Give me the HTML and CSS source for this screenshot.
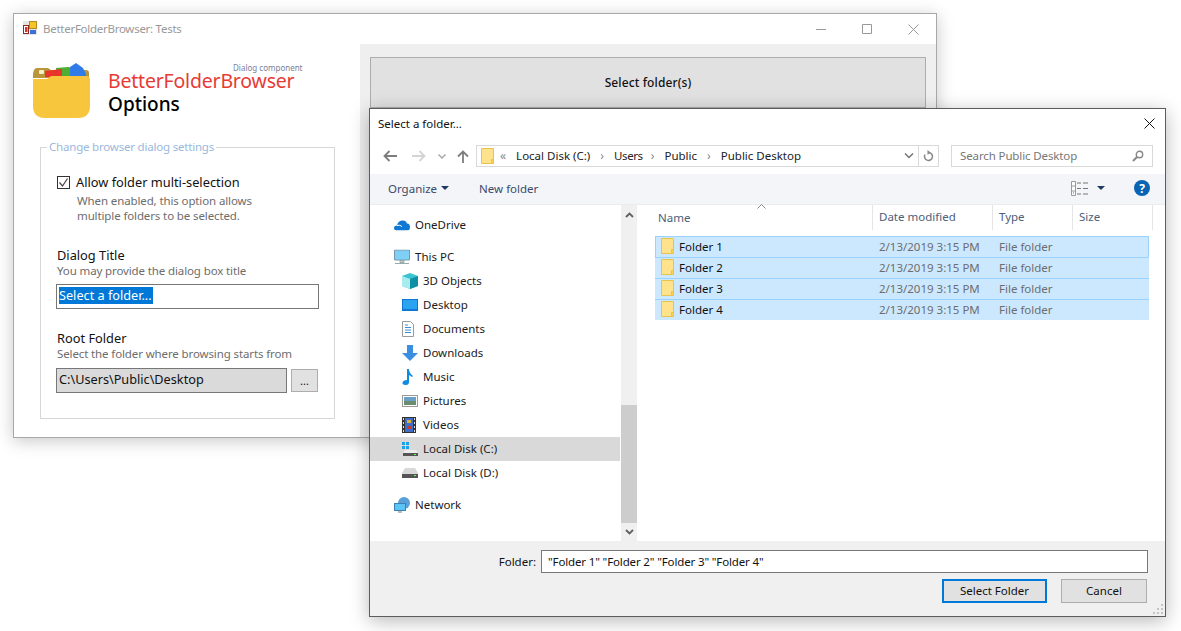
FILE: index.html
```html
<!DOCTYPE html>
<html lang="en">
<head>
<meta charset="utf-8">
<title>BetterFolderBrowser: Tests</title>
<link rel="stylesheet" href="styles.css">
</head>
<body>
<svg class="defs" width="0" height="0">
  <defs>
    <symbol id="folder" viewBox="0 0 13 16">
      <path d="M.5.500h12v15H.5z" fill="#ffe28c" stroke="#e8c44e"/>
      <path d="M10.500 15.500v-4h2v4z" fill="#ffd24f" stroke="#e8c44e"/>
    </symbol>
  </defs>
</svg>

<section class="window app">
  <header class="titlebar">
    <svg class="app-icon" width="14" height="14" viewBox="0 0 14 14">
      <rect x="0" y="0" width="14" height="14" fill="#e4e4e4"/>
      <rect x="6.500" y=".5" width="7" height="7" fill="#f6c525" stroke="#b08a20"/>
      <rect x="0.500" y="4.500" width="5" height="8" fill="#fff" stroke="#8a2a20"/>
      <rect x="2" y="6" width="2.500" height="5" fill="#d8352a"/>
      <rect x="7" y="9" width="6" height="4" fill="#3d6fd8"/>
    </svg>
    <span class="app-title">BetterFolderBrowser: Tests</span>
    <div class="caption-buttons">
      <span class="caption"><svg width="10" height="10" viewBox="0 0 10 10"><path d="M0 5.500h10" stroke="#999"/></svg></span>
      <span class="caption"><svg width="10" height="10" viewBox="0 0 10 10"><path d="M.5.500h9v9h-9z" fill="none" stroke="#999"/></svg></span>
      <span class="caption"><svg width="11" height="11" viewBox="0 0 11 11"><path d="M.5.500l10 10M10.500.500l-10 10" stroke="#999"/></svg></span>
    </div>
  </header>
  <div class="app-body">
    <aside class="options">
      <div class="brand">
        <svg class="logo" width="57" height="57" viewBox="0 0 57 57">
          <path d="M0 14q0-8 4-8h11l3 2h35q3 0 3 3v5H0z" fill="#b8963c"/>
          <rect x="6" y="8" width="5" height="4" rx="1" fill="#f8eec8"/>
          <path d="M23 6l12-1 6 1v10H23z" fill="#4caf32"/>
          <path d="M37 5l6-4 7 5 3 6v4H37z" fill="#2f7ce8"/>
          <path d="M12 9l17-2v8H12z" fill="#e8352c"/>
          <path d="M0 18q0-1 1-1h11q3 0 4-1.500t3-1.500h34q4 0 4 4v26q0 12-12 12H12Q0 56 0 44z" fill="#f8c63d"/>
        </svg>
        <div class="brand-text">
          <span class="brand-tag">Dialog component</span>
          <div class="brand-name">BetterFolderBrowser</div>
          <div class="brand-sub">Options</div>
        </div>
      </div>
      <fieldset class="group">
        <legend class="group-legend">Change browser dialog settings</legend>
        <div class="check-row">
          <span class="check"><svg width="11" height="11" viewBox="0 0 11 11"><path d="M1.500 5.500l3 3.500 5-7.500" fill="none" stroke="#444" stroke-width="1.200"/></svg></span>
          <span class="field-label">Allow folder multi-selection</span>
        </div>
        <p class="hint hint-check">When enabled, this option allows<br>multiple folders to be selected.</p>
        <div class="field-label title-label">Dialog Title</div>
        <p class="hint">You may provide the dialog box title</p>
        <div class="text-input"><span class="selected">Select a folder...</span></div>
        <div class="field-label root-label">Root Folder</div>
        <p class="hint">Select the folder where browsing starts from</p>
        <div class="path-row">
          <div class="text-input path-input">C:\Users\Public\Desktop</div>
          <button class="browse" type="button">...</button>
        </div>
      </fieldset>
    </aside>
    <main class="action-panel">
      <button class="select-btn" type="button">Select folder(s)</button>
    </main>
  </div>
</section>

<section class="window dialog">
  <header class="dlg-title">
    <span>Select a folder...</span>
    <svg width="11" height="11" viewBox="0 0 11 11"><path d="M.5.500l10 10M10.500.500l-10 10" stroke="#111"/></svg>
  </header>
  <div class="nav-bar">
    <div class="nav-buttons">
      <svg width="14" height="12" viewBox="0 0 14 12"><path d="M6.500 1L1.500 6l5 5M2 6h12" fill="none" stroke="#7d7d7d" stroke-width="1.800"/></svg>
      <svg class="nav-fwd" width="14" height="12" viewBox="0 0 14 12"><path d="M7.500 1l5 5-5 5M12 6H0" fill="none" stroke="#d4d4d4" stroke-width="1.800"/></svg>
      <svg class="nav-chev" width="8" height="5" viewBox="0 0 8 5"><path d="M.5.500L4 4 7.500.5" fill="none" stroke="#aaa" stroke-width="1.500"/></svg>
      <svg width="12" height="13" viewBox="0 0 12 13"><path d="M1 6.500l5-5 5 5M6 2v11" fill="none" stroke="#7d7d7d" stroke-width="1.800"/></svg>
    </div>
    <div class="address">
      <svg class="addr-folder" width="13" height="16"><use href="#folder"/></svg>
      <span class="crumb-sep first">«</span>
      <span class="crumb">Local Disk (C:)</span><span class="crumb-sep">›</span>
      <span class="crumb crumb-users">Users</span><span class="crumb-sep">›</span>
      <span class="crumb">Public</span><span class="crumb-sep">›</span>
      <span class="crumb">Public Desktop</span>
      <svg class="addr-chev" width="10" height="6" viewBox="0 0 10 6"><path d="M1 .5l4 4 4-4" fill="none" stroke="#777" stroke-width="1.500"/></svg>
      <span class="addr-refresh"><svg width="11" height="12" viewBox="0 0 11 12"><path d="M6 2.500a4 4 0 1 1-4 2" fill="none" stroke="#888" stroke-width="1.500"/><path d="M4.500 0l3 2.500-3 2.500z" fill="#888"/></svg></span>
    </div>
    <div class="search">
      <span class="search-text">Search Public Desktop</span>
      <svg width="12" height="12" viewBox="0 0 12 12"><circle cx="7.500" cy="4.500" r="3.200" fill="none" stroke="#888" stroke-width="1.400"/><path d="M5 7l-4 4" stroke="#888" stroke-width="2"/></svg>
    </div>
  </div>
  <div class="toolbar">
    <span class="tool organize">Organize</span><span class="caret"></span>
    <span class="tool new-folder">New folder</span>
    <svg class="view-icon" width="17" height="15" viewBox="0 0 17 15">
      <path d="M.5.500h4v14h-4zM.5 5h4M.5 10h4" fill="#fff" stroke="#999"/>
      <path d="M6 2h4M12 2h5M6 7.500h4M12 7.500h5M6 13h4M12 13h5" stroke="#777"/>
      <rect x="2" y="11.500" width="1" height="1" fill="#d33"/>
    </svg>
    <span class="caret view-caret"></span>
    <span class="help">?</span>
  </div>
  <div class="browser">
    <nav class="tree">
      <div class="tree-group">
        <div class="tree-item">
          <svg width="16" height="11" viewBox="0 0 16 11"><path d="M3 11Q0 11 0 8.500 0 6 3 6q1-5 6-5 3 0 4 3 3 0 3 3.500T13 11z" fill="#0f78d4"/><path d="M3 6q3-1 5 1" stroke="#fff" fill="none"/></svg>
          <span>OneDrive</span>
        </div>
      </div>
      <div class="tree-group">
        <div class="tree-item">
          <svg width="16" height="15" viewBox="0 0 16 15"><path d="M.5.500h15v10H.5z" fill="#7fd0f7" stroke="#7a98ad"/><path d="M6 11h4v2H6zM1 14h14" stroke="#9aa" fill="#bcc"/></svg>
          <span>This PC</span>
        </div>
        <div class="tree-item sub">
          <svg width="16" height="16" viewBox="0 0 16 16"><path d="M8 0l8 3v10l-8 3-8-3V3z" fill="#3cc3d0"/><path d="M0 3l8 3v10l-8-3z" fill="#a8ecf0"/><path d="M8 6l8-3v10l-8 3z" fill="#0f8fa5"/></svg>
          <span>3D Objects</span>
        </div>
        <div class="tree-item sub">
          <svg width="16" height="12" viewBox="0 0 16 12"><rect width="16" height="12" fill="#0f78d4"/><rect x="1" y="1" width="14" height="9" fill="#2aa4f0"/></svg>
          <span>Desktop</span>
        </div>
        <div class="tree-item sub">
          <svg width="12" height="16" viewBox="0 0 12 16"><path d="M.5.500h8l3 3v12H.5z" fill="#fff" stroke="#999"/><path d="M3 4h3M3 6.500h6M3 9h6M3 11.500h6" stroke="#3a8fd8"/></svg>
          <span>Documents</span>
        </div>
        <div class="tree-item sub">
          <svg width="16" height="16" viewBox="0 0 16 16"><path d="M5 0h6v8h5l-8 8-8-8h5z" fill="#3a8fe0"/></svg>
          <span>Downloads</span>
        </div>
        <div class="tree-item sub">
          <svg width="12" height="16" viewBox="0 0 12 16"><path d="M5 0h2q0 4 4 7l-1 1-3-2v7q0 3-3 3-4 0-3.500-2.500T5 11z" fill="#0f8be0"/></svg>
          <span>Music</span>
        </div>
        <div class="tree-item sub">
          <svg width="16" height="12" viewBox="0 0 16 12"><rect x=".5" y=".5" width="15" height="11" fill="#fff" stroke="#999"/><rect x="2" y="2" width="12" height="4" fill="#6a9fc8"/><rect x="2" y="6" width="12" height="4" fill="#6c8c70"/></svg>
          <span>Pictures</span>
        </div>
        <div class="tree-item sub">
          <svg width="14" height="16" viewBox="0 0 14 16"><rect width="14" height="16" fill="#333"/><path d="M1 1h1v2H1zM1 5h1v2H1zM1 9h1v2H1zM1 13h1v2H1zM12 1h1v2h-1zM12 5h1v2h-1zM12 9h1v2h-1zM12 13h1v2h-1z" fill="#ddd"/><rect x="3" y="1" width="8" height="14" fill="#3f6ec8"/><path d="M5 3h4v3H5z" fill="#e0b030"/><path d="M5 9h4v3H5z" fill="#c83a30"/></svg>
          <span>Videos</span>
        </div>
        <div class="tree-item sub active">
          <svg width="16" height="14" viewBox="0 0 16 14"><path d="M0 0h3v3H0zM4 0h3v3H4zM0 4h3v3H0zM4 4h3v3H4z" fill="#1ea0e8"/><path d="M3 8h11l2 3v3H1v-3z" fill="#ececec"/><rect x="1" y="11" width="15" height="3" fill="#555"/><rect x="12" y="12" width="2" height="1" fill="#6f6"/></svg>
          <span>Local Disk (C:)</span>
        </div>
        <div class="tree-item sub">
          <svg width="16" height="10" viewBox="0 0 16 10"><path d="M3 0h10l3 5v5H0V5z" fill="#d8d8d8"/><rect y="6" width="16" height="4" fill="#555"/><rect x="12" y="7" width="2" height="1" fill="#6f6"/></svg>
          <span>Local Disk (D:)</span>
        </div>
      </div>
      <div class="tree-group">
        <div class="tree-item">
          <svg width="16" height="16" viewBox="0 0 16 16"><circle cx="10" cy="6" r="6" fill="#5a9fd8"/><rect x=".5" y="6.500" width="11" height="7" fill="#5cc4f5" stroke="#3a80b0"/><path d="M4 15h4" stroke="#778"/></svg>
          <span>Network</span>
        </div>
      </div>
    </nav>
    <div class="scrollbar">
      <svg class="sb-arrow" width="9" height="6" viewBox="0 0 9 6"><path d="M1 5l3.500-3.500L8 5" fill="none" stroke="#606060" stroke-width="1.800"/></svg>
      <span class="sb-thumb"></span>
      <svg class="sb-arrow" width="9" height="6" viewBox="0 0 9 6"><path d="M1 1l3.500 3.500L8 1" fill="none" stroke="#606060" stroke-width="1.800"/></svg>
    </div>
    <div class="files">
      <div class="file-head">
        <span class="col-name">Name<svg class="sort" width="9" height="5" viewBox="0 0 9 5"><path d="M.5 4.500l4-4 4 4" fill="none" stroke="#888"/></svg></span>
        <span class="col-date">Date modified</span>
        <span class="col-type">Type</span>
        <span class="col-size">Size</span>
      </div>
      <div class="file-rows">
        <div class="file-row focus"><span class="col-name"><svg width="13" height="16"><use href="#folder"/></svg>Folder 1</span><span class="col-date">2/13/2019 3:15 PM</span><span class="col-type">File folder</span></div>
        <div class="file-row"><span class="col-name"><svg width="13" height="16"><use href="#folder"/></svg>Folder 2</span><span class="col-date">2/13/2019 3:15 PM</span><span class="col-type">File folder</span></div>
        <div class="file-row"><span class="col-name"><svg width="13" height="16"><use href="#folder"/></svg>Folder 3</span><span class="col-date">2/13/2019 3:15 PM</span><span class="col-type">File folder</span></div>
        <div class="file-row"><span class="col-name"><svg width="13" height="16"><use href="#folder"/></svg>Folder 4</span><span class="col-date">2/13/2019 3:15 PM</span><span class="col-type">File folder</span></div>
      </div>
    </div>
  </div>
  <footer class="dlg-footer">
    <div class="folder-row">
      <span>Folder:</span>
      <div class="folder-input">"Folder 1" "Folder 2" "Folder 3" "Folder 4"</div>
    </div>
    <div class="dlg-actions">
      <button class="dlg-btn primary" type="button">Select Folder</button>
      <button class="dlg-btn" type="button">Cancel</button>
    </div>
    <svg class="grip" width="10" height="10" viewBox="0 0 10 10"><path d="M8 0h2v2H8zM4 4h2v2H4zM8 4h2v2H8zM0 8h2v2H0zM4 8h2v2H4zM8 8h2v2H8z" fill="#c4c4c4"/></svg>
  </footer>
</section>
</body>
</html>
```

FILE: styles.css
```css
* { box-sizing: border-box; }
html, body { margin: 0; padding: 0; }
body {
  position: relative;
  width: 1181px;
  height: 631px;
  overflow: hidden;
  background: #fff;
  font-family: "Noto Sans", "Open Sans", sans-serif;
  font-size: 11.5px;
  color: #111;
}
button { font-family: inherit; }
.defs { position: absolute; }

.window { position: absolute; display: flex; flex-direction: column; background: #fff; }
.app {
  left: 13px; top: 13px; width: 924px; height: 425px;
  border: 1px solid #a8a8a8;
  box-shadow: 0 3px 16px rgba(0,0,0,.22);
}
.dialog {
  left: 369px; top: 108px; width: 797px; height: 509px;
  border: 1px solid #5c5c5c;
  box-shadow: 0 4px 18px rgba(0,0,0,.28);
}

/* App window */
.titlebar { display: flex; align-items: center; height: 30px; flex: none; padding-left: 9px; }
.app-icon { flex: none; margin-bottom: 2px; }
.app-title { margin: 0 0 2px 6px; font-size: 11.5px; letter-spacing: -.27px; color: #999; }
.caption-buttons { display: flex; margin-left: auto; }
.caption { display: flex; width: 46px; height: 28px; align-items: center; justify-content: center; }
.app-body { display: flex; flex: 1; min-height: 0; }
.options { width: 346px; flex: none; }
.action-panel { flex: 1; background: #efefef; padding: 13px 10px 0 10px; }
.select-btn {
  display: block; width: 556px; height: 51px;
  background: #e1e1e1; border: 1px solid #adadad;
  font-size: 12px; font-weight: 500; letter-spacing: .12px; color: #111;
}
.brand { display: flex; height: 57px; margin: 18px 0 0 19px; }
.logo { flex: none; }
.brand-text { position: relative; margin-left: 18px; padding-top: 6px; }
.brand-tag { position: absolute; left: 125px; top: 1px; font-size: 8px; line-height: 9px; color: #7b7f9a; white-space: nowrap; }
.brand-name { font-size: 19.5px; line-height: 18px; color: #e63b35; white-space: nowrap; margin-top: 4px; letter-spacing: -.2px; }
.brand-sub { font-size: 19px; line-height: 22px; font-weight: 500; color: #000; margin-top: 3px; }

.group {
  margin: 20px 0 0 26px; padding: 0 0 0 16px;
  width: 295px; height: 280px;
  border: 1px solid #d6d6d6;
}
.group-legend { margin-left: -10px; padding: 0 2px; font-size: 11.5px; letter-spacing: -.2px; line-height: 16px; color: #9bb8dc; }
.check-row { display: flex; align-items: center; margin-top: 19px; height: 16px; }
.check { display: flex; align-items: center; justify-content: center; width: 13px; height: 13px; border: 1px solid #333; flex: none; }
.field-label { font-size: 12.8px; line-height: 15px; color: #111; }
.check-row .field-label { margin-left: 6px; }
.hint { margin: 0; font-size: 11.5px; letter-spacing: -.12px; line-height: 15px; color: #6d6d6d; white-space: nowrap; }
.hint-check { margin: 3px 0 0 20px; }
.title-label { margin-top: 25px; }
.text-input {
  width: 263px; height: 25px; margin: 6px 0 0 -1px; padding: 2px;
  border: 1px solid #777; font-size: 12.7px; line-height: 17px; color: #111;
}
.selected { display: inline-block; background: #0078d7; color: #fff; padding-right: 1px; }
.root-label { margin-top: 22px; }
.path-row { display: flex; align-items: flex-start; gap: 4px; margin-top: 1px; }
.path-input { width: 231px; background: #dadada; }
.browse {
  width: 27px; height: 23px; margin-top: 7px; padding: 0;
  background: #e1e1e1; border: 1px solid #adadad; font-size: 11px; line-height: 14px; color: #111;
}

/* Dialog */
.dlg-title { display: flex; align-items: center; justify-content: space-between; flex: none; height: 29px; padding: 0 10px 0 8px; font-size: 11.5px; color: #111; }
.nav-bar { display: flex; align-items: center; flex: none; height: 36px; }
.nav-buttons { display: flex; align-items: center; width: 106px; padding-left: 13px; flex: none; }
.nav-buttons svg { flex: none; margin-right: 15px; }
.nav-buttons .nav-fwd { margin-right: 12px; }
.nav-buttons .nav-chev { margin-right: 11px; }
.address {
  display: flex; align-items: center; width: 463px; height: 22px; flex: none;
  border: 1px solid #d9d9d9; padding-left: 4px; font-size: 11.5px; color: #222;
}
.addr-folder { flex: none; margin-right: 6px; }
.crumb { white-space: nowrap; margin-bottom: 2px; }
.crumb-users { letter-spacing: -.4px; margin-right: -2px; }
.crumb-sep { color: #888; margin: 0 10px; line-height: 1; font-size: 12px; }
.crumb-sep.first { margin: 0 10px 0 0; }
.addr-chev { margin-left: auto; margin-right: 4px; flex: none; }
.addr-refresh { display: flex; align-items: center; justify-content: center; width: 20px; height: 20px; border-left: 1px solid #d9d9d9; flex: none; }
.search {
  display: flex; align-items: center; justify-content: space-between;
  margin-left: 12px; width: 202px; height: 22px; padding: 0 8px;
  border: 1px solid #d9d9d9; color: #777; letter-spacing: -.12px;
}
.search-text { margin-bottom: 2px; }
.toolbar { display: flex; align-items: center; flex: none; height: 31px; padding: 0 0 2px 18px; background: #f3f5f8; border-bottom: 1px solid #ececec; color: #3b4a6b; }
.toolbar .tool { white-space: nowrap; }
.caret { width: 0; height: 0; margin-left: 4px; border: 4px solid transparent; border-top: 4px solid #1f3864; border-bottom: 0; flex: none; }
.new-folder { margin-left: 30px; }
.view-icon { margin-left: auto; flex: none; }
.view-caret { margin-left: 9px; }
.help {
  display: flex; align-items: center; justify-content: center;
  width: 16px; height: 16px; margin: 0 15px 0 29px; border-radius: 50%;
  background: #0a64b4; color: #fff; font-size: 12px; font-weight: 700; flex: none;
}
.browser { display: flex; flex: 1; min-height: 0; }
.tree { width: 251px; flex: none; padding-top: 8px; }
.tree-group { margin-bottom: 8px; }
.tree-item { display: flex; align-items: center; height: 24px; padding-left: 24px; color: #1a1a1a; position: relative; }
.tree-item svg { position: absolute; left: 24px; top: 50%; transform: translateY(-50%); }
.tree-item span { margin: 0 0 2px 21px; white-space: nowrap; }
.tree-item.sub svg { left: 32px; }
.tree-item.sub span { margin-left: 29px; }
.tree-item.active { background: #d9d9d9; margin-right: 1px; }
.scrollbar { display: flex; flex-direction: column; align-items: center; width: 16px; flex: none; background: #f0f0f0; padding: 7px 0 5px; margin-right: 1px; }
.sb-thumb { display: block; width: 16px; flex: none; height: 118px; margin: 187px 0 6px; background: #cdcdcd; }
.files { flex: 1; min-width: 0; padding-left: 17px; }
.file-head { display: flex; height: 25px; color: #4c607a; align-items: center; }
.file-head span { position: relative; height: 25px; line-height: 24px; white-space: nowrap; border-right: 1px solid #e5e5e5; }
.sort { position: absolute; left: 102px; top: -1px; }
.col-name { width: 218px; padding-left: 3px; flex: none; display: flex; align-items: center; }
.col-date { width: 120px; padding-left: 6px; flex: none; }
.col-type { width: 80px; padding-left: 6px; flex: none; }
.col-size { width: 80px; padding-left: 6px; flex: none; }
.file-rows { margin-top: 6px; width: 494px; }
.file-row {
  display: flex; align-items: center; height: 21px; padding-bottom: 2px;
  background: #cce8ff; border-top: 1px solid #99d1ff; color: #6d6d6d; white-space: nowrap;
}
.file-row.focus { box-shadow: inset 1px 0 #99d1ff, inset -1px 0 #99d1ff; }
.file-row .col-name { padding-left: 6px; color: #111; }
.file-row .col-name svg { margin-right: 5px; flex: none; }
.dlg-footer { position: relative; flex: none; height: 75px; background: #f0f0f0; }
.folder-row { display: flex; align-items: center; justify-content: flex-end; gap: 5px; padding: 9px 17px 0 0; }
.folder-input { width: 607px; height: 23px; padding: 0 6px; line-height: 21px; background: #fff; border: 1px solid #777; letter-spacing: -.14px; }
.dlg-actions { display: flex; justify-content: flex-end; gap: 14px; padding: 6px 18px 0 0; }
.dlg-btn { width: 86px; height: 24px; padding: 0 0 2px; background: #e1e1e1; border: 1px solid #adadad; font-size: 11.5px; color: #111; }
.dlg-btn.primary { width: 105px; border: 2px solid #0078d7; }
.grip { position: absolute; right: 2px; bottom: 2px; }
```
